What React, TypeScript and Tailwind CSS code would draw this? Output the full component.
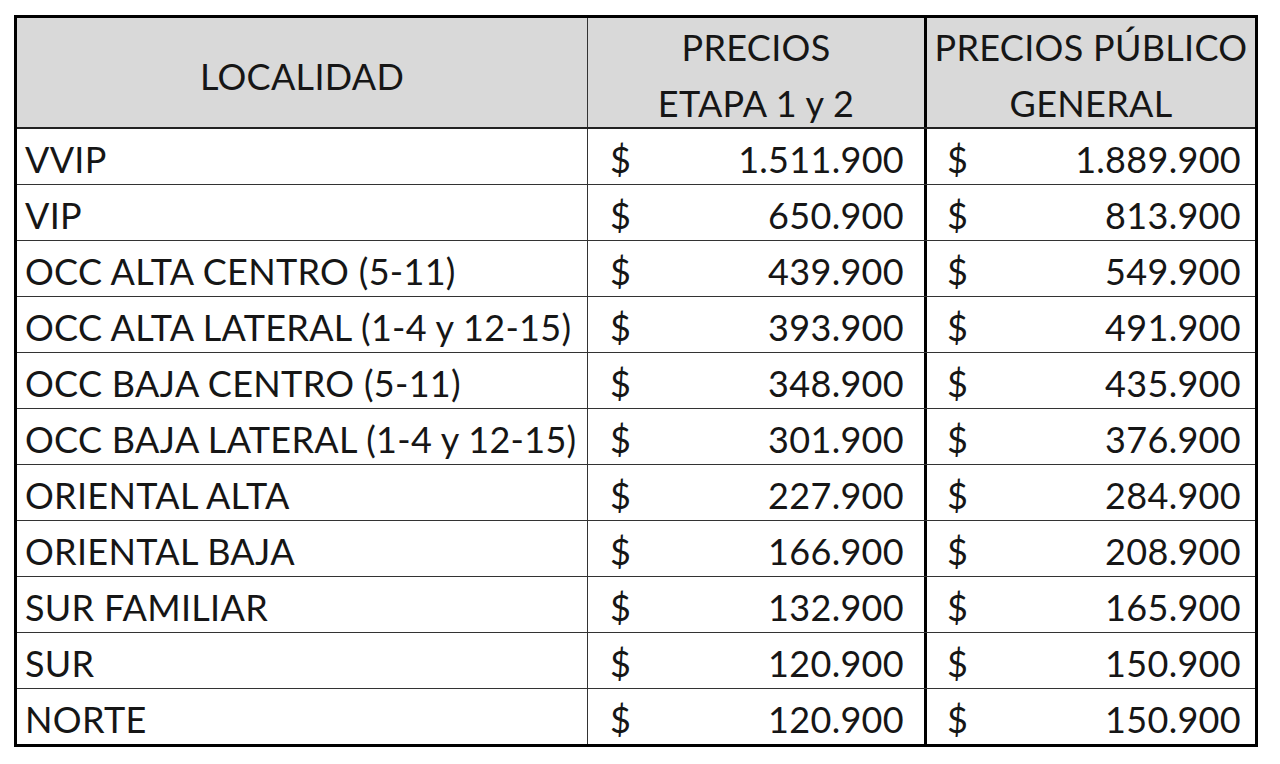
import React from 'react';

const rows = [
  { name: 'VVIP', etapa: '1.511.900', general: '1.889.900' },
  { name: 'VIP', etapa: '650.900', general: '813.900' },
  { name: 'OCC ALTA CENTRO (5-11)', etapa: '439.900', general: '549.900' },
  { name: 'OCC ALTA LATERAL (1-4 y 12-15)', etapa: '393.900', general: '491.900' },
  { name: 'OCC BAJA CENTRO (5-11)', etapa: '348.900', general: '435.900' },
  { name: 'OCC BAJA LATERAL (1-4 y 12-15)', etapa: '301.900', general: '376.900' },
  { name: 'ORIENTAL ALTA', etapa: '227.900', general: '284.900' },
  { name: 'ORIENTAL BAJA', etapa: '166.900', general: '208.900' },
  { name: 'SUR FAMILIAR', etapa: '132.900', general: '165.900' },
  { name: 'SUR', etapa: '120.900', general: '150.900' },
  { name: 'NORTE', etapa: '120.900', general: '150.900' },
];

export default function App() {
  return (
    <div
      className="min-h-[764px] bg-white pt-[15px] pl-[14px] text-[#161616] text-[36px] tracking-[0.3px]"
      style={{ fontFamily: 'Lato, "Open Sans", sans-serif' }}
    >
      <div className="w-[1244px] border-[3px] border-black">
        {/* Header */}
        <div className="flex h-[111px] bg-[#d9d9d9] border-b-2 border-[#222]">
          <div className="w-[571px] border-r border-[#333] flex items-center justify-center pt-[6px]">
            LOCALIDAD
          </div>
          <div className="w-[339px] border-r-[3px] border-black flex flex-col items-center justify-center pt-[4px] leading-[56px]">
            <span>PRECIOS</span>
            <span>ETAPA 1 y 2</span>
          </div>
          <div className="flex-1 flex flex-col items-center justify-center pt-[4px] leading-[56px]">
            <span>PRECIOS PÚBLICO</span>
            <span>GENERAL</span>
          </div>
        </div>

        {/* Rows */}
        {rows.map((r, i) => (
          <div
            key={r.name}
            className={
              i === rows.length - 1
                ? 'flex h-[55px] items-center'
                : 'flex h-[56px] items-center border-b border-[#333]'
            }
          >
            <div className="w-[571px] h-full border-r border-[#333] flex items-center pt-[5px] pl-[8px] whitespace-nowrap">
              {r.name}
            </div>
            <div className="w-[339px] h-full border-r-[3px] border-black flex items-center justify-between pt-[5px] pl-[22px] pr-[20px]">
              <span>$</span>
              <span>{r.etapa}</span>
            </div>
            <div className="flex-1 h-full flex items-center justify-between pt-[5px] pl-[20px] pr-[14px]">
              <span>$</span>
              <span>{r.general}</span>
            </div>
          </div>
        ))}
      </div>
    </div>
  );
}
